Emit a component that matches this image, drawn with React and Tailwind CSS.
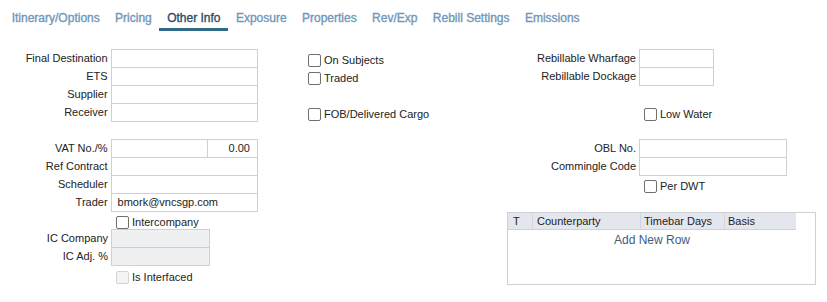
const tabs = ['Itinerary/Options', 'Pricing', 'Other Info', 'Exposure', 'Properties', 'Rev/Exp', 'Rebill Settings', 'Emissions']

function Check({ label, disabled }) {
  return (
    <div className="flex items-center gap-[3px]">
      <span
        className={`inline-block w-[13px] h-[13px] rounded-[2px] border ${disabled ? 'border-[#d3d3d3] bg-[#f4f4f4]' : 'border-[#6f6f6f] bg-white'}`}
      />
      <span className="leading-[13px]">{label}</span>
    </div>
  )
}

function Field({ label, labelW = 'w-[108px]', boxW = 'w-[148px]', disabled, children }) {
  return (
    <div className="flex h-[18px] items-start">
      <div className={`${labelW} h-[19px] leading-[19px] text-right`}>{label}</div>
      <div
        className={`ml-[3px] h-[19px] ${boxW} border border-[#cdd0d6] ${disabled ? 'bg-[#eff0f2]' : 'bg-white'} leading-[17px]`}
      >
        {children}
      </div>
    </div>
  )
}

export default function App() {
  return (
    <div className="w-[827px] h-[302px] bg-white text-[11px] text-[#222] font-['Liberation_Sans',Arial,sans-serif] overflow-hidden">
      <div className="flex pl-[4px]">
        {tabs.map((t) => (
          <div
            key={t}
            className={`px-[7.7px] pt-3 pb-[3px] text-[12px] leading-[13px] [-webkit-text-stroke:0.35px] border-b-[3px] ${t === 'Other Info' ? 'text-[#2e4b64] border-[#2f6a86]' : 'text-[#7197b9] border-transparent'}`}
          >
            {t}
          </div>
        ))}
      </div>

      <div className="flex pt-[18px]">
        {/* left column */}
        <div className="w-[258px] shrink-0">
          <Field label="Final Destination" />
          <Field label="ETS" />
          <Field label="Supplier" />
          <Field label="Receiver" />
          <div className="h-[18px]" />
          <Field label="VAT No./%">
            <div className="flex h-full">
              <div className="w-[96px] border-r border-[#cdd0d6]" />
              <div className="flex-1 text-right pr-[7px]">0.00</div>
            </div>
          </Field>
          <Field label="Ref Contract" />
          <Field label="Scheduler" />
          <Field label="Trader">
            <div className="pl-[6px]">bmork@vncsgp.com</div>
          </Field>
          <div className="h-[18px] pt-[5px] pl-[116px]">
            <Check label="Intercompany" />
          </div>
          <Field label="IC Company" boxW="w-[99px]" disabled />
          <Field label="IC Adj. %" boxW="w-[99px]" disabled />
          <div className="pt-[6px] pl-[116px]">
            <Check label="Is Interfaced" disabled />
          </div>
        </div>

        {/* middle column */}
        <div className="ml-[50px] w-[192px] shrink-0 pt-[2px]">
          <div className="h-[18px] flex items-center">
            <Check label="On Subjects" />
          </div>
          <div className="h-[18px] flex items-center">
            <Check label="Traded" />
          </div>
          <div className="h-[18px]" />
          <div className="h-[18px] flex items-center">
            <Check label="FOB/Delivered Cargo" />
          </div>
        </div>

        {/* right column */}
        <div className="w-[327px] shrink-0">
          <Field label="Rebillable Wharfage" labelW="w-[136px]" boxW="w-[75px]" />
          <Field label="Rebillable Dockage" labelW="w-[136px]" boxW="w-[75px]" />
          <div className="h-[20px]" />
          <div className="h-[18px] flex items-center pl-[144px]">
            <Check label="Low Water" />
          </div>
          <div className="h-[16px]" />
          <Field label="OBL No." labelW="w-[136px]" boxW="w-[148px]" />
          <Field label="Commingle Code" labelW="w-[136px]" boxW="w-[148px]" />
          <div className="pt-[5px] pl-[144px]">
            <Check label="Per DWT" />
          </div>
          <div className="ml-[7px] mt-[19px] w-[309px] h-[73px] border border-[#cdd0d6]">
            <div className="flex w-[288px] h-[17px] bg-[#e4e6ee] border-b border-[#cdd0d6] leading-[16px]">
              <div className="w-[25px] pl-[5px] border-r border-[#d2d5dd]">T</div>
              <div className="w-[108px] pl-[4px] border-r border-[#d2d5dd]">Counterparty</div>
              <div className="w-[84px] pl-[3px] border-r border-[#d2d5dd]">Timebar Days</div>
              <div className="flex-1 pl-[3px]">Basis</div>
            </div>
            <div className="w-[288px] pt-[3px] text-center text-[12px] leading-[14px] text-[#3e5e80]">Add New Row</div>
          </div>
        </div>
      </div>
    </div>
  )
}
